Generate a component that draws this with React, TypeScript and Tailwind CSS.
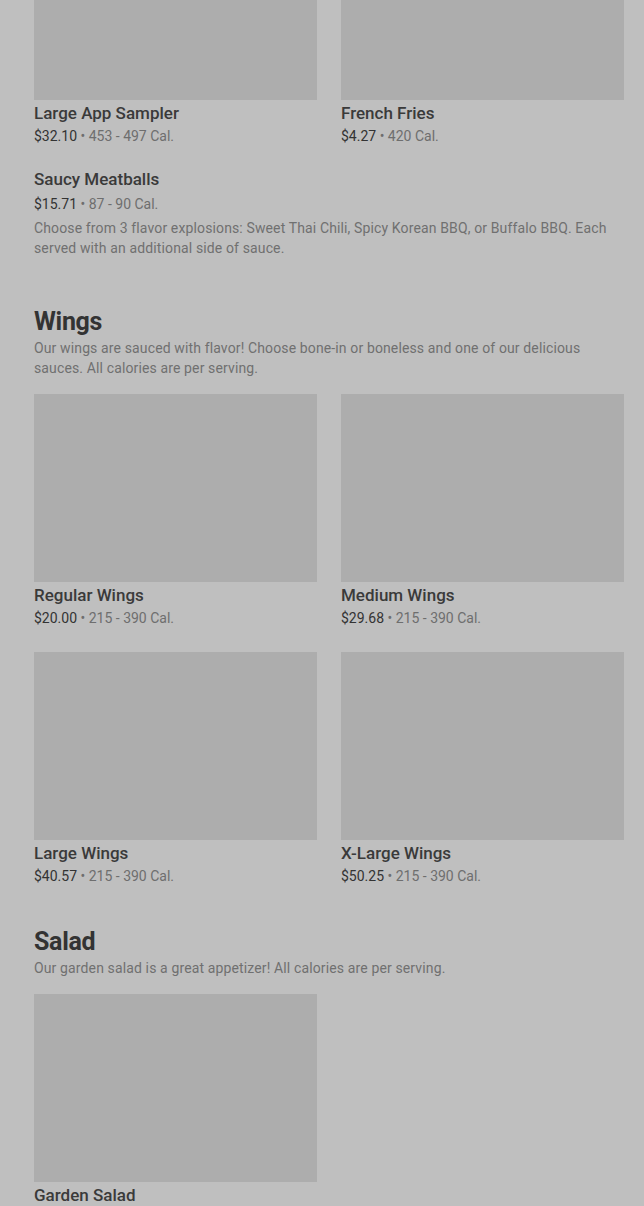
type Item = { name: string; price: string; cal: string; desc?: string; image?: boolean }

function MenuItem({ item, first }: { item: Item; first?: boolean }) {
  return (
    <div className="flex flex-col">
      {item.image !== false ? (
        <div className={`h-[188px] w-full bg-[#adadad] ${first ? '-mt-[88px]' : ''}`} />
      ) : null}
      <div className={`${item.image !== false ? 'mt-[2px]' : ''} text-[17px] font-medium leading-[22px] text-[#3a3a3a]`}>
        {item.name}
      </div>
      <div className={`${item.image === false ? 'mt-[4px]' : 'mt-[2px]'} text-[14px] leading-[20px]`}>
        <span className="text-[#333333]">{item.price}</span>
        <span className="text-[#6e6e6e]"> • {item.cal}</span>
      </div>
      {item.desc ? (
        <p className="mt-[4px] text-[14px] leading-[20px] tracking-[0.13px] text-[#707070]">{item.desc}</p>
      ) : null}
    </div>
  )
}

function Section({ title, desc, items }: { title: string; desc: string; items: Item[] }) {
  return (
    <section className="mt-[49px]">
      <h2 className="text-[25px] font-bold leading-[30px] tracking-[-0.3px] text-[#333333]">{title}</h2>
      <p className="mt-[1px] text-[14px] leading-[20px] tracking-[0.13px] text-[#707070]">{desc}</p>
      <div className="mt-[16px] grid grid-cols-2 gap-x-[24px] gap-y-[24px]">
        {items.map((it) => (
          <MenuItem key={it.name} item={it} />
        ))}
      </div>
    </section>
  )
}

export default function App() {
  return (
    <div
      className="min-h-[1206px] overflow-hidden bg-[#bfbfbf] pl-[34px] pr-[20px]"
      style={{ fontFamily: 'Roboto, "Liberation Sans", sans-serif' }}
    >
      <div className="grid grid-cols-2 gap-x-[24px] gap-y-[22px]">
        <MenuItem first item={{ name: 'Large App Sampler', price: '$32.10', cal: '453 - 497 Cal.' }} />
        <MenuItem first item={{ name: 'French Fries', price: '$4.27', cal: '420 Cal.' }} />
        <div className="col-span-2">
          <MenuItem
            item={{
              name: 'Saucy Meatballs',
              price: '$15.71',
              cal: '87 - 90 Cal.',
              image: false,
              desc: 'Choose from 3 flavor explosions: Sweet Thai Chili, Spicy Korean BBQ, or Buffalo BBQ. Each served with an additional side of sauce.',
            }}
          />
        </div>
      </div>

      <Section
        title="Wings"
        desc="Our wings are sauced with flavor! Choose bone-in or boneless and one of our delicious sauces. All calories are per serving."
        items={[
          { name: 'Regular Wings', price: '$20.00', cal: '215 - 390 Cal.' },
          { name: 'Medium Wings', price: '$29.68', cal: '215 - 390 Cal.' },
          { name: 'Large Wings', price: '$40.57', cal: '215 - 390 Cal.' },
          { name: 'X-Large Wings', price: '$50.25', cal: '215 - 390 Cal.' },
        ]}
      />

      <div className="-mt-[8px]">
        <Section
          title="Salad"
          desc="Our garden salad is a great appetizer! All calories are per serving."
          items={[{ name: 'Garden Salad', price: '$9.99', cal: '120 - 340 Cal.' }]}
        />
      </div>
    </div>
  )
}
